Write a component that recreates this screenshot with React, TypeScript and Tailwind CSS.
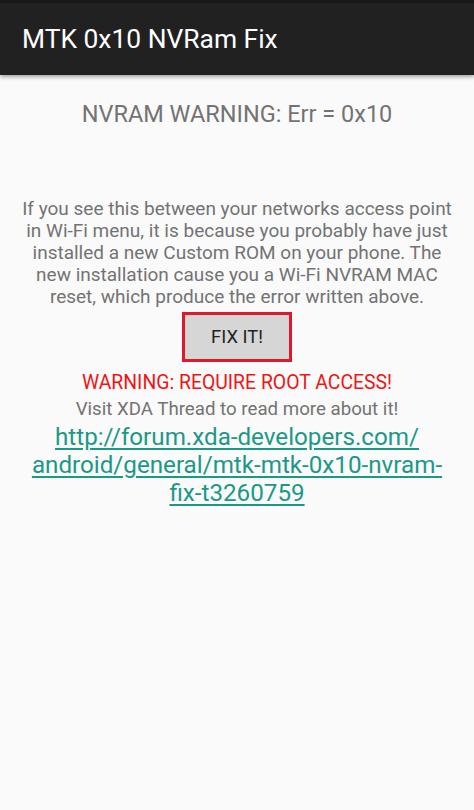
export default function App() {
  return (
    <div
      className="flex min-h-[810px] w-full flex-col bg-[#fafafa]"
      style={{ fontFamily: "Roboto, 'Noto Sans', sans-serif" }}
    >
      {/* Action bar */}
      <header className="relative flex h-[75px] items-center border-t-[3px] border-[#181818] bg-[#212121] px-[22px] shadow-[0_2px_4px_rgba(0,0,0,0.35)]">
        <h1 className="text-[26.4px] font-normal leading-none text-white">MTK 0x10 NVRam Fix</h1>
      </header>

      <main className="flex flex-col items-center px-[14px] text-center">
        <h2 className="mt-[26px] text-[23.5px] leading-[26px] text-[#737373]">
          NVRAM WARNING: Err = 0x10
        </h2>

        <p className="mt-[71px] text-[19px] leading-[22px] text-[#737373]">
          If you see this between your networks access point in Wi-Fi menu, it is because you
          probably have just installed a new Custom ROM on your phone. The new installation cause
          you a Wi-Fi NVRAM MAC reset, which produce the error written above.
        </p>

        <button
          type="button"
          className="mt-[4px] h-[50px] w-[110px] border-[3px] border-[#e0182b] bg-[#d6d6d6] text-[18.4px] text-[#222]"
        >
          FIX IT!
        </button>

        <p className="mt-[10px] text-[19.4px] leading-[22px] text-[#f01414]">
          WARNING: REQUIRE ROOT ACCESS!
        </p>
        <p className="mt-[4px] text-[18.7px] leading-[22px] text-[#737373]">
          Visit XDA Thread to read more about it!
        </p>
        <a
          href="#"
          className="mt-[3px] px-[6px] text-[24.2px] leading-[28px] text-[#1b9986] underline underline-offset-[3px]"
        >
          http://forum.xda-developers.com/
          <wbr />
          android/general/mtk-mtk-0x10-nvram-fix-t3260759
        </a>
      </main>
    </div>
  );
}
